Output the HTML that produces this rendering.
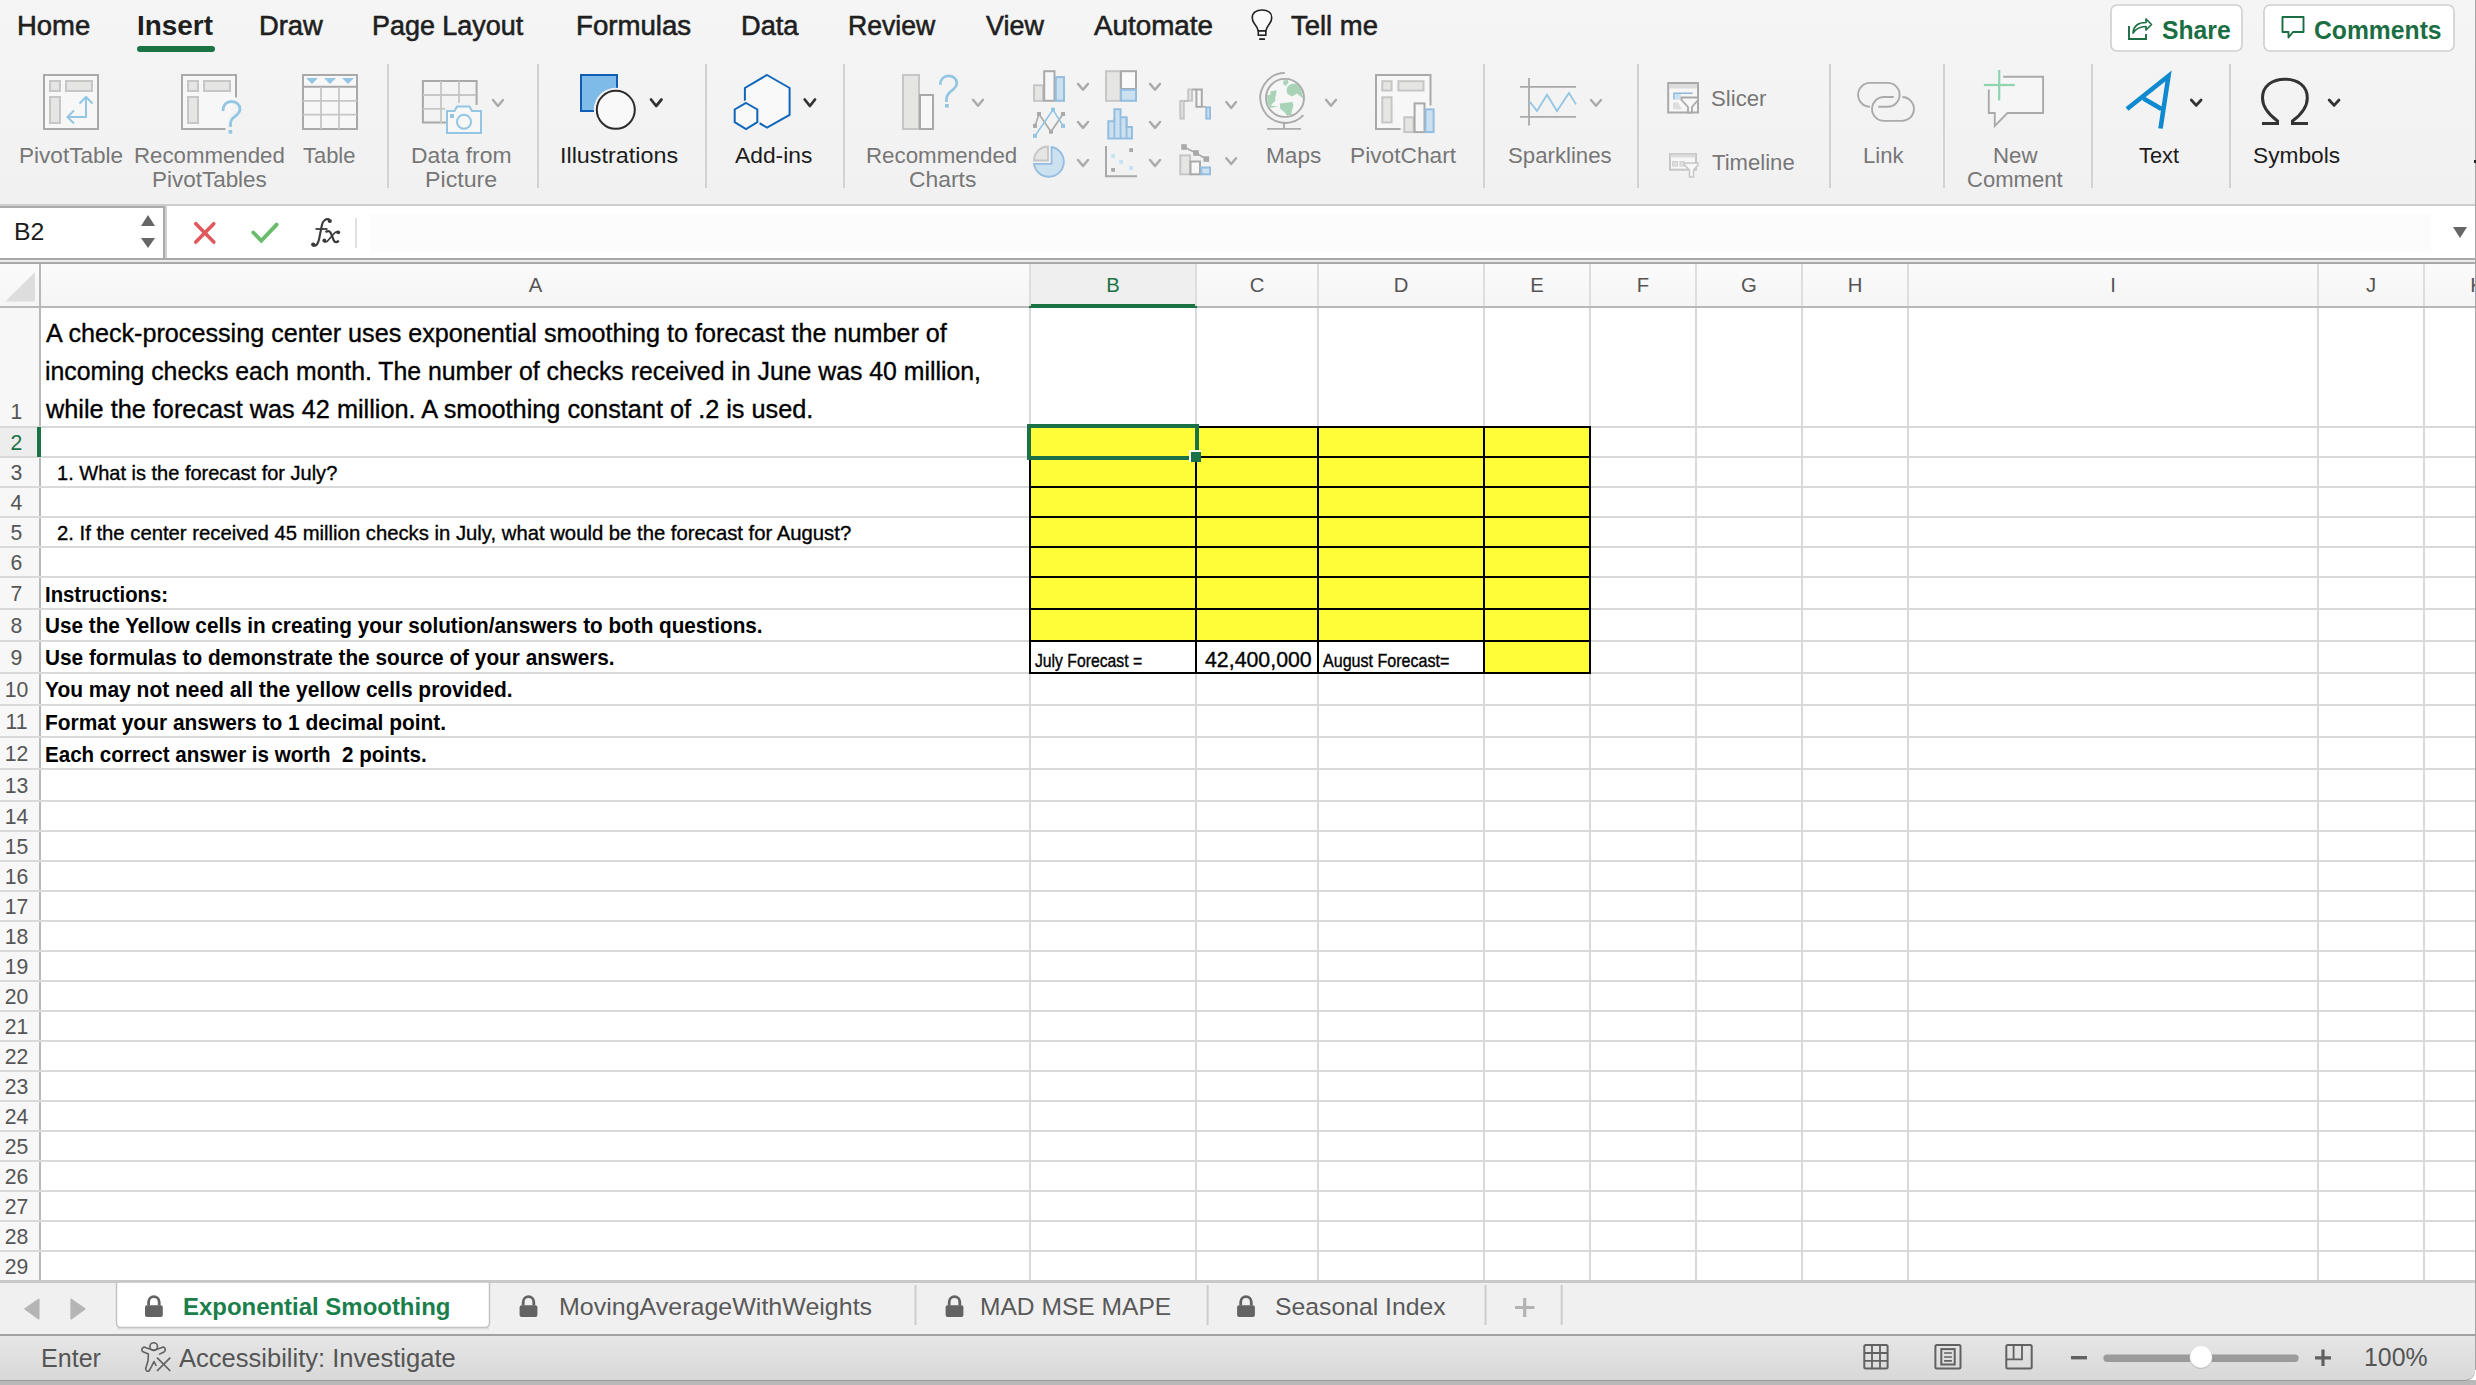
<!DOCTYPE html>
<html><head><meta charset="utf-8"><style>
html,body{margin:0;padding:0}
body{width:2476px;height:1385px;position:relative;overflow:hidden;background:#fff;font-family:"Liberation Sans",sans-serif}
.t{position:absolute;white-space:pre;line-height:1;transform-origin:0 0}
</style></head><body>
<div style="position:absolute;left:0;top:0;width:2476px;height:204px;background:linear-gradient(#f5f5f5,#f1f1f1)"></div>
<div style="position:absolute;left:0;top:204px;width:2476px;height:2px;background:#cdcdcd"></div>
<div class="t" style="left:17.03px;top:11.62px;font-size:27.62px;color:#1f1f1f;transform:scaleX(0.9940);-webkit-text-stroke:0.6px #1f1f1f;">Home</div>
<div class="t" style="left:136.94px;top:11.62px;font-size:27.62px;color:#1f1f1f;font-weight:bold;transform:scaleX(1.0107);">Insert</div>
<div class="t" style="left:259.43px;top:11.62px;font-size:27.62px;color:#1f1f1f;transform:scaleX(0.9898);-webkit-text-stroke:0.6px #1f1f1f;">Draw</div>
<div class="t" style="left:372.38px;top:11.62px;font-size:27.62px;color:#1f1f1f;transform:scaleX(0.9750);-webkit-text-stroke:0.6px #1f1f1f;">Page Layout</div>
<div class="t" style="left:575.96px;top:11.62px;font-size:27.62px;color:#1f1f1f;transform:scaleX(1.0006);-webkit-text-stroke:0.6px #1f1f1f;">Formulas</div>
<div class="t" style="left:741.35px;top:11.62px;font-size:27.62px;color:#1f1f1f;transform:scaleX(0.9854);-webkit-text-stroke:0.6px #1f1f1f;">Data</div>
<div class="t" style="left:847.97px;top:11.62px;font-size:27.62px;color:#1f1f1f;transform:scaleX(0.9628);-webkit-text-stroke:0.6px #1f1f1f;">Review</div>
<div class="t" style="left:986.00px;top:11.62px;font-size:27.62px;color:#1f1f1f;transform:scaleX(0.9748);-webkit-text-stroke:0.6px #1f1f1f;">View</div>
<div class="t" style="left:1094.00px;top:11.62px;font-size:27.62px;color:#1f1f1f;transform:scaleX(1.0064);-webkit-text-stroke:0.6px #1f1f1f;">Automate</div>
<div class="t" style="left:1291.00px;top:11.62px;font-size:27.62px;color:#1f1f1f;transform:scaleX(0.9944);-webkit-text-stroke:0.6px #1f1f1f;">Tell me</div>
<div style="position:absolute;left:137px;top:46px;width:78px;height:6px;border-radius:3px;background:#1b7343"></div>
<svg style="position:absolute;left:0;top:0" width="2476" height="206"><rect x="387" y="64" width="2" height="124" fill="#d2d2d2"/><rect x="537" y="64" width="2" height="124" fill="#d2d2d2"/><rect x="705" y="64" width="2" height="124" fill="#d2d2d2"/><rect x="843" y="64" width="2" height="124" fill="#d2d2d2"/><rect x="1483" y="64" width="2" height="124" fill="#d2d2d2"/><rect x="1637" y="64" width="2" height="124" fill="#d2d2d2"/><rect x="1829" y="64" width="2" height="124" fill="#d2d2d2"/><rect x="1943" y="64" width="2" height="124" fill="#d2d2d2"/><rect x="2091" y="64" width="2" height="124" fill="#d2d2d2"/><rect x="2229" y="64" width="2" height="124" fill="#d2d2d2"/><rect x="44.00" y="75.00" width="54.00" height="54.00" fill="#f7f7f7" stroke="#a9a9a9" stroke-width="2"/><rect x="50.00" y="81.00" width="10.00" height="10.00" fill="#e5e5e3" stroke="#c6c6c6" stroke-width="2"/><rect x="66.00" y="81.00" width="26.00" height="10.00" fill="#e5e5e3" stroke="#c6c6c6" stroke-width="2"/><rect x="50.00" y="97.00" width="10.00" height="26.00" fill="#e5e5e3" stroke="#c6c6c6" stroke-width="2"/><polyline points="67.3,117 86,117 86,97" fill="none" stroke="#93c6e3" stroke-width="2"/><polyline points="79.5,103.5 86,97 92.5,103.5" fill="none" stroke="#93c6e3" stroke-width="2"/><polyline points="74,110.5 67.5,117 74,123.5" fill="none" stroke="#93c6e3" stroke-width="2"/><polyline points="236,97.5 236,75 182,75 182,129 225.5,129" fill="#f7f7f7" stroke="#a9a9a9" stroke-width="2"/><rect x="188.00" y="81.00" width="10.00" height="10.00" fill="#e5e5e3" stroke="#c6c6c6" stroke-width="2"/><rect x="204.00" y="81.00" width="26.00" height="10.00" fill="#e5e5e3" stroke="#c6c6c6" stroke-width="2"/><rect x="188.00" y="97.00" width="10.00" height="26.00" fill="#e5e5e3" stroke="#c6c6c6" stroke-width="2"/><path d="M223,111 C223,104.5 227,101.5 231.5,101.5 C236.5,101.5 240,105 240,109 C240,114 235,116 232.5,118.5 C231,120 230.5,121.5 230.5,124 L230.5,127" fill="none" stroke="#93c6e3" stroke-width="2.8"/><rect x="228.6" y="130" width="3.6" height="3.6" fill="#93c6e3"/><rect x="303.00" y="75.00" width="54.00" height="54.00" fill="#f7f7f7" stroke="#a9a9a9" stroke-width="2"/><line x1="303" y1="86.8" x2="357" y2="86.8" stroke="#a9a9a9" stroke-width="2"/><line x1="303" y1="100.8" x2="357" y2="100.8" stroke="#c6c6c6" stroke-width="1.8"/><line x1="303" y1="114.7" x2="357" y2="114.7" stroke="#c6c6c6" stroke-width="1.8"/><line x1="321" y1="87" x2="321" y2="129" stroke="#c6c6c6" stroke-width="1.8"/><line x1="339" y1="87" x2="339" y2="129" stroke="#c6c6c6" stroke-width="1.8"/><polygon points="306,78 318,78 312,84" fill="#93c6e3"/><polygon points="324,78 336,78 330,84" fill="#93c6e3"/><polygon points="342,78 354,78 348,84" fill="#93c6e3"/><polyline points="446,122.5 422.9,122.5 422.9,80.9 476.6,80.9 476.6,105" fill="none" stroke="#a9a9a9" stroke-width="2"/><line x1="423" y1="95" x2="476" y2="95" stroke="#c6c6c6" stroke-width="1.8"/><line x1="423" y1="108.8" x2="445" y2="108.8" stroke="#c6c6c6" stroke-width="1.8"/><line x1="441" y1="81" x2="441" y2="123" stroke="#c6c6c6" stroke-width="1.8"/><line x1="459" y1="81" x2="459" y2="103" stroke="#c6c6c6" stroke-width="1.8"/><path d="M447,111 L454.5,111 L457,106.5 L469.5,106.5 L472,111 L481,111 L481,133 L447,133 Z" fill="#f7f7f7" stroke="#93c6e3" stroke-width="2"/><circle cx="464" cy="121.8" r="7" fill="none" stroke="#93c6e3" stroke-width="2"/><rect x="450" y="114" width="4" height="4" fill="#93c6e3"/><polyline points="493.0,100.0 498.0,106.0 503.0,100.0" fill="none" stroke="#aaaaaa" stroke-width="2.4" stroke-linecap="round" stroke-linejoin="round"/><rect x="581" y="75" width="36" height="36" fill="#7fbbe8" stroke="#0f5eb3" stroke-width="2"/><circle cx="615.8" cy="109.8" r="22" fill="#f2f2f2"/><circle cx="615.8" cy="109.8" r="19" fill="#f9f9f9" stroke="#2b2b2b" stroke-width="2"/><polyline points="651.0,99.5 656.2,106.0 661.5,99.5" fill="none" stroke="#333" stroke-width="2.8" stroke-linecap="round" stroke-linejoin="round"/><polygon points="767,75 789.6,88 789.6,114.8 767,127.5 744.9,114.8 744.9,88" fill="#f9f9f9" stroke="#1067b9" stroke-width="2"/><polygon points="746,103 757.3,109.5 757.3,122.2 746,129 734.7,122.2 734.7,109.5" fill="#f2f2f2" stroke="#f2f2f2" stroke-width="5"/><polygon points="746,103 757.3,109.5 757.3,122.2 746,129 734.7,122.2 734.7,109.5" fill="#f9f9f9" stroke="#1067b9" stroke-width="2"/><polyline points="804.7,99.5 809.9,106.0 815.0,99.5" fill="none" stroke="#333" stroke-width="2.8" stroke-linecap="round" stroke-linejoin="round"/><rect x="903.00" y="75.00" width="16.00" height="54.00" fill="#e5e5e3" stroke="#c6c6c6" stroke-width="2"/><rect x="920.00" y="95.00" width="13.00" height="34.00" fill="#f7f7f7" stroke="#a9a9a9" stroke-width="2"/><path d="M940.3,84.8 C940.3,79 944,75.8 948.5,75.8 C953.5,75.8 956.8,79 956.8,83 C956.8,88 952,90 949,93 C947,95 946.4,96.5 946.4,99 L946.4,102" fill="none" stroke="#93c6e3" stroke-width="2.7"/><rect x="945" y="104" width="3.8" height="3.6" fill="#93c6e3"/><polyline points="973.0,99.7 978.0,105.8 983.0,99.7" fill="none" stroke="#aaaaaa" stroke-width="2.4" stroke-linecap="round" stroke-linejoin="round"/><rect x="1034.00" y="85.30" width="9.00" height="15.50" fill="#e5e5e3" stroke="#c6c6c6" stroke-width="2"/><rect x="1044.20" y="71.20" width="10.30" height="29.60" fill="#f7f7f7" stroke="#a9a9a9" stroke-width="2"/><rect x="1055.80" y="77.10" width="8.20" height="23.70" fill="#cbe1f0" stroke="#95bddf" stroke-width="2"/><polyline points="1078.0,83.9 1083.0,89.8 1088.0,83.9" fill="none" stroke="#aaaaaa" stroke-width="2.4" stroke-linecap="round" stroke-linejoin="round"/><rect x="1106.00" y="71.20" width="14.50" height="29.60" fill="#e5e5e3" stroke="#c6c6c6" stroke-width="2"/><rect x="1121.00" y="71.20" width="15.00" height="17.80" fill="#fafafa" stroke="#a9a9a9" stroke-width="2"/><rect x="1121.00" y="89.80" width="15.00" height="11.00" fill="#cbe1f0" stroke="#95bddf" stroke-width="2"/><polyline points="1150.0,83.9 1155.0,89.8 1160.0,83.9" fill="none" stroke="#aaaaaa" stroke-width="2.4" stroke-linecap="round" stroke-linejoin="round"/><rect x="1180.30" y="101.00" width="3.50" height="17.60" fill="#e5e5e3" stroke="#c6c6c6" stroke-width="2"/><rect x="1188.20" y="89.50" width="3.80" height="11.30" fill="#e5e5e3" stroke="#c6c6c6" stroke-width="2"/><rect x="1196.40" y="89.50" width="5.40" height="17.30" fill="#f7f7f7" stroke="#a9a9a9" stroke-width="2"/><rect x="1206.30" y="107.40" width="3.70" height="11.20" fill="#cbe1f0" stroke="#95bddf" stroke-width="2"/><line x1="1184" y1="101" x2="1188" y2="101" stroke="#a9a9a9" stroke-width="1.4"/><line x1="1192.5" y1="89.5" x2="1196" y2="89.5" stroke="#a9a9a9" stroke-width="2"/><line x1="1202" y1="106.8" x2="1206" y2="106.8" stroke="#a9a9a9" stroke-width="1.4"/><polyline points="1226.3,102.0 1231.2,107.9 1236.0,102.0" fill="none" stroke="#aaaaaa" stroke-width="2.4" stroke-linecap="round" stroke-linejoin="round"/><polyline points="1035,125.9 1039,114 1051,131.7 1063,114" fill="none" stroke="#a9a9a9" stroke-width="1.6"/><rect x="1033" y="123.9" width="4" height="4" fill="#a9a9a9"/><rect x="1037" y="112" width="4" height="4" fill="#a9a9a9"/><rect x="1049" y="129.7" width="4" height="4" fill="#a9a9a9"/><rect x="1061" y="112" width="4" height="4" fill="#a9a9a9"/><polyline points="1035,135.9 1053,109.8 1063,125.9" fill="none" stroke="#93c6e3" stroke-width="1.6"/><rect x="1033" y="133.9" width="4" height="4" fill="#93c6e3"/><rect x="1051" y="107.8" width="4" height="4" fill="#93c6e3"/><rect x="1061" y="123.9" width="4" height="4" fill="#93c6e3"/><polyline points="1078.0,122.0 1083.0,127.9 1088.0,122.0" fill="none" stroke="#aaaaaa" stroke-width="2.4" stroke-linecap="round" stroke-linejoin="round"/><path d="M1108.3,138.6 L1108.3,121.3 L1114.4,121.3 L1114.4,109.3 L1120.5,109.3 L1120.5,117.3 L1126.6,117.3 L1126.6,127.1 L1132,127.1 L1132,138.6 Z" fill="#cbe1f0" stroke="#95bddf" stroke-width="2"/><line x1="1114.4" y1="118" x2="1114.4" y2="138" stroke="#95bddf" stroke-width="1.8"/><line x1="1120.5" y1="118" x2="1120.5" y2="138" stroke="#95bddf" stroke-width="1.8"/><line x1="1126.6" y1="118" x2="1126.6" y2="138" stroke="#95bddf" stroke-width="1.8"/><polyline points="1150.0,122.0 1155.0,127.9 1160.0,122.0" fill="none" stroke="#aaaaaa" stroke-width="2.4" stroke-linecap="round" stroke-linejoin="round"/><path d="M1051.6,147 A15,15 0 1 1 1034,163.8 L1051.6,163.8 Z" fill="#cbe1f0" stroke="#95bddf" stroke-width="1.8"/><path d="M1048,146.5 L1048,160.5 L1034,160.5 A14,14 0 0 1 1048,146.5 Z" fill="#e5e5e3" stroke="#c6c6c6" stroke-width="1.8"/><polyline points="1078.0,160.0 1083.0,166.0 1088.0,160.0" fill="none" stroke="#aaaaaa" stroke-width="2.4" stroke-linecap="round" stroke-linejoin="round"/><polyline points="1106,146 1106,176.2 1137,176.2" fill="none" stroke="#a9a9a9" stroke-width="2"/><rect x="1129.2" y="148.2" width="3.8" height="3.8" fill="#a9a9a9"/><rect x="1111.2" y="168" width="3.8" height="3.8" fill="#a9a9a9"/><rect x="1111.2" y="154" width="3.8" height="3.8" fill="#c5e2f2"/><rect x="1119.2" y="160" width="3.8" height="3.8" fill="#c5e2f2"/><rect x="1129.2" y="166" width="3.8" height="3.8" fill="#c5e2f2"/><polyline points="1150.0,160.0 1155.0,166.0 1160.0,160.0" fill="none" stroke="#aaaaaa" stroke-width="2.4" stroke-linecap="round" stroke-linejoin="round"/><rect x="1180.30" y="155.40" width="9.70" height="18.90" fill="#e5e5e3" stroke="#c6c6c6" stroke-width="2"/><rect x="1190.50" y="161.50" width="9.50" height="12.80" fill="#f7f7f7" stroke="#a9a9a9" stroke-width="2"/><rect x="1201.20" y="167.50" width="8.80" height="6.80" fill="#cbe1f0" stroke="#95bddf" stroke-width="2"/><polyline points="1184,147 1196,153 1206.2,159" fill="none" stroke="#a9a9a9" stroke-width="1.6"/><rect x="1181.2" y="144.2" width="5.6" height="5.6" fill="#a9a9a9"/><rect x="1193.2" y="150.2" width="5.6" height="5.6" fill="#a9a9a9"/><rect x="1203.5" y="156.3" width="5.6" height="5.6" fill="#a9a9a9"/><polyline points="1226.3,158.2 1231.2,164.1 1236.0,158.2" fill="none" stroke="#aaaaaa" stroke-width="2.4" stroke-linecap="round" stroke-linejoin="round"/><circle cx="1285" cy="97.9" r="19" fill="#f6f6f6" stroke="#aaaaaa" stroke-width="1.9"/><path d="M1270.5,91.2 L1276.7,90.3 L1276.3,93.4 L1275.2,97.3 L1275.2,101.2 L1273.6,102.4 L1271.6,104.3 L1271.3,105.9 L1278.3,106.3 L1272.8,107.4 L1270,107.8 L1267.5,103 L1267,95.3 L1270.5,94.6 Z M1279.8,103.5 L1292.3,102 L1293.5,105.5 L1292.3,109 L1291.5,112.9 L1291.9,114.8 L1286.8,115.6 L1285.3,112.9 L1280.2,108.6 Z M1287.6,86.4 L1291.1,84 L1296.2,83.6 L1300.9,88.7 L1303.2,98.8 L1297,93.4 L1292.3,96.5 L1287.6,94.2 L1286.5,90.3 Z M1283.3,80.5 L1288,80.1 L1288.4,82.9 L1285.3,86 L1283.3,84 Z" fill="#a9d3b7"/><path d="M1284.9,72.9 A25,25 0 1 0 1303.4,115.2" fill="none" stroke="#aaaaaa" stroke-width="1.9"/><line x1="1284" y1="122.5" x2="1284" y2="129" stroke="#aaaaaa" stroke-width="1.9"/><line x1="1267" y1="128.9" x2="1301" y2="128.9" stroke="#aaaaaa" stroke-width="1.9"/><polyline points="1326.0,99.8 1331.0,105.8 1336.0,99.8" fill="none" stroke="#aaaaaa" stroke-width="2.4" stroke-linecap="round" stroke-linejoin="round"/><polyline points="1430.5,105.6 1430.5,75 1376,75 1376,129 1400.6,129" fill="#f7f7f7" stroke="#a9a9a9" stroke-width="2"/><rect x="1382.30" y="81.20" width="9.30" height="9.30" fill="#e5e5e3" stroke="#c6c6c6" stroke-width="2"/><rect x="1398.40" y="81.20" width="25.10" height="9.30" fill="#e5e5e3" stroke="#c6c6c6" stroke-width="2"/><rect x="1382.30" y="97.30" width="9.30" height="25.10" fill="#e5e5e3" stroke="#c6c6c6" stroke-width="2"/><rect x="1404.30" y="117.30" width="9.30" height="14.80" fill="#e5e5e3" stroke="#c6c6c6" stroke-width="2"/><rect x="1414.60" y="103.40" width="9.90" height="28.70" fill="#f7f7f7" stroke="#a9a9a9" stroke-width="2"/><rect x="1425.50" y="109.40" width="8.10" height="22.70" fill="#cbe1f0" stroke="#95bddf" stroke-width="2"/><line x1="1529" y1="78" x2="1529" y2="125.6" stroke="#a9a9a9" stroke-width="1.8"/><line x1="1520" y1="86.8" x2="1576" y2="86.8" stroke="#a9a9a9" stroke-width="1.8"/><line x1="1520" y1="116.9" x2="1576" y2="116.9" stroke="#a9a9a9" stroke-width="1.8"/><polyline points="1530,102 1537,111 1547,94.7 1557,111 1569,92.9 1576,104.4" fill="none" stroke="#93c6e3" stroke-width="1.8"/><polyline points="1591.0,100.0 1596.0,105.8 1601.0,100.0" fill="none" stroke="#aaaaaa" stroke-width="2.4" stroke-linecap="round" stroke-linejoin="round"/><rect x="1668.20" y="83.00" width="29.80" height="29.50" fill="#f7f7f7" stroke="#a9a9a9" stroke-width="2"/><rect x="1669" y="84" width="28" height="4.5" fill="#dcdcdc"/><polyline points="1674,99.6 1674,93.3 1692.7,93.3" fill="none" stroke="#8fb8dd" stroke-width="1.6"/><rect x="1674.8" y="94" width="6" height="5.6" fill="#cde2f1"/><path d="M1673,102.6 L1678,102.6 L1682,109.3 L1673,109.3 Z" fill="#dedede"/><path d="M1681.5,97.5 L1698,97.5 L1698,100 L1692,107 L1692,112.5 L1688,112.5 L1688,107 L1681.5,100 Z" fill="#f7f7f7" stroke="#a9a9a9" stroke-width="1.8"/><rect x="1670.00" y="154.10" width="26.00" height="15.60" fill="#f7f7f7" stroke="#c6c6c6" stroke-width="2"/><rect x="1670.5" y="154.5" width="25" height="3" fill="#dcdcdc"/><rect x="1672.5" y="161.5" width="5" height="4.5" fill="#dedede" stroke="#d0d0d0" stroke-width="1"/><rect x="1680" y="161.5" width="4" height="4.5" fill="#dedede" stroke="#d0d0d0" stroke-width="1"/><path d="M1684.5,163 L1698,163 L1698,165 L1693.5,170 L1693.5,177 L1689.5,177 L1689.5,170 L1684.5,165 Z" fill="#f7f7f7" stroke="#c6c6c6" stroke-width="1.5"/><path d="M1870,106.7 A11.9,11.9 0 0 1 1870,82.9 L1887.7,82.9 A11.9,11.9 0 0 1 1887.7,106.7 L1878.3,106.7" fill="none" stroke="#aaaaaa" stroke-width="1.9"/><path d="M1893.8,97 L1884,97 A11.95,11.95 0 0 0 1884,120.9 L1901.6,120.9 A11.95,11.95 0 0 0 1902.4,97" fill="none" stroke="#aaaaaa" stroke-width="1.9"/><polyline points="2003.2,76.8 2043.1,76.8 2043.1,113 2007.4,113 1994.8,126 1994.8,113 1988.8,113 1988.8,89.4" fill="#f6f6f6" stroke="#aaaaaa" stroke-width="1.9"/><line x1="1999.2" y1="70" x2="1999.2" y2="100.4" stroke="#8fd4b0" stroke-width="2.2"/><line x1="1983.8" y1="85" x2="2014.8" y2="85" stroke="#8fd4b0" stroke-width="2.2"/><path d="M2127,109 L2168.5,76 L2160.5,128.5 M2143.5,98.4 L2161.5,109" fill="none" stroke="#0f8ad0" stroke-width="4.6" stroke-linejoin="miter"/><polyline points="2191.3,100.0 2196.2,105.4 2201.1,100.0" fill="none" stroke="#333" stroke-width="2.8" stroke-linecap="round" stroke-linejoin="round"/><path d="M2262,123.5 L2277.5,123.5 L2277.5,121 C2268,114 2262.5,107 2262.5,98 C2262.5,86 2272,79.2 2285,79.2 C2298,79.2 2307.3,86 2307.3,98 C2307.3,107 2302,114 2292.5,121 L2292.5,123.5 L2308,123.5" fill="none" stroke="#333" stroke-width="3"/><polyline points="2329.2,100.0 2334.1,105.4 2339.0,100.0" fill="none" stroke="#333" stroke-width="2.8" stroke-linecap="round" stroke-linejoin="round"/><path d="M1258.3,31 C1257.5,27 1255.5,25 1254,23 C1252.5,21 1252.3,19.5 1252.3,17.5 C1252.3,12.5 1256.5,10 1262,10 C1267.5,10 1271.7,12.5 1271.7,17.5 C1271.7,19.5 1271.5,21 1270,23 C1268.5,25 1266.5,27 1265.8,31 Z" fill="#fafafa" stroke="#222" stroke-width="1.6"/><rect x="1258.3" y="31" width="7.5" height="4.2" fill="#fafafa" stroke="#222" stroke-width="1.6"/><rect x="1259.2" y="38.2" width="5.8" height="1.8" fill="#222"/><rect x="2111" y="5" width="131" height="46" rx="6" fill="#fff" stroke="#cfcfcf" stroke-width="1.6"/><rect x="2264" y="5" width="190" height="46" rx="6" fill="#fff" stroke="#cfcfcf" stroke-width="1.6"/><polyline points="2129,26 2129,39 2146,39 2146,34" fill="none" stroke="#1b6e43" stroke-width="1.9"/><path d="M2133,33 C2133.5,26.5 2138,22.5 2146,22.5 L2146,19 L2151.5,24.5 L2146,30 L2146,26.5 C2140,26.5 2136,28.5 2133,33 Z" fill="none" stroke="#1b6e43" stroke-width="1.7" stroke-linejoin="round"/><path d="M2282.5,17 L2303.5,17 L2303.5,32 L2293,32 L2288.5,37.5 L2288.5,32 L2282.5,32 Z" fill="none" stroke="#1b6e43" stroke-width="1.9" stroke-linejoin="round"/></svg>
<div class="t" style="left:18.55px;top:144.64px;font-size:21.80px;color:#777777;transform:scaleX(1.0357);">PivotTable</div>
<div class="t" style="left:133.76px;top:144.64px;font-size:21.80px;color:#777777;transform:scaleX(1.0205);">Recommended</div>
<div class="t" style="left:152.15px;top:168.54px;font-size:21.80px;color:#777777;transform:scaleX(1.0301);">PivotTables</div>
<div class="t" style="left:302.90px;top:144.64px;font-size:21.80px;color:#777777;transform:scaleX(1.0062);">Table</div>
<div class="t" style="left:411.13px;top:144.64px;font-size:21.80px;color:#777777;transform:scaleX(1.0509);">Data from</div>
<div class="t" style="left:424.91px;top:168.54px;font-size:21.80px;color:#777777;transform:scaleX(1.0647);">Picture</div>
<div class="t" style="left:560.35px;top:144.64px;font-size:21.80px;color:#1c1c1c;transform:scaleX(1.0717);">Illustrations</div>
<div class="t" style="left:735.10px;top:144.64px;font-size:21.80px;color:#1c1c1c;transform:scaleX(1.0462);">Add-ins</div>
<div class="t" style="left:866.25px;top:144.64px;font-size:21.80px;color:#777777;transform:scaleX(1.0231);">Recommended</div>
<div class="t" style="left:908.97px;top:168.54px;font-size:21.80px;color:#777777;transform:scaleX(1.0499);">Charts</div>
<div class="t" style="left:1265.88px;top:144.64px;font-size:21.80px;color:#777777;transform:scaleX(1.0367);">Maps</div>
<div class="t" style="left:1349.96px;top:144.64px;font-size:21.80px;color:#777777;transform:scaleX(1.0422);">PivotChart</div>
<div class="t" style="left:1507.89px;top:144.64px;font-size:21.80px;color:#777777;transform:scaleX(1.0184);">Sparklines</div>
<div class="t" style="left:1710.98px;top:88.14px;font-size:21.80px;color:#777777;transform:scaleX(1.0173);">Slicer</div>
<div class="t" style="left:1712.00px;top:152.14px;font-size:21.80px;color:#777777;transform:scaleX(1.0136);">Timeline</div>
<div class="t" style="left:1862.90px;top:144.64px;font-size:21.80px;color:#777777;transform:scaleX(1.0140);">Link</div>
<div class="t" style="left:1992.90px;top:144.64px;font-size:21.80px;color:#777777;transform:scaleX(1.0206);">New</div>
<div class="t" style="left:1967.27px;top:168.54px;font-size:21.80px;color:#777777;transform:scaleX(1.0130);">Comment</div>
<div class="t" style="left:2139.00px;top:144.64px;font-size:21.80px;color:#1c1c1c;transform:scaleX(1.0000);">Text</div>
<div class="t" style="left:2252.98px;top:144.64px;font-size:21.80px;color:#1c1c1c;transform:scaleX(1.0425);">Symbols</div>
<div class="t" style="left:2161.97px;top:17.54px;font-size:25.00px;color:#1b6e43;font-weight:bold;transform:scaleX(0.9880);">Share</div>
<div class="t" style="left:2314.37px;top:17.54px;font-size:25.00px;color:#1b6e43;font-weight:bold;transform:scaleX(0.9876);">Comments</div>
<div style="position:absolute;left:0;top:206px;width:2476px;height:52px;background:#fff"></div>
<div style="position:absolute;left:0;top:206px;width:165px;height:2px;background:#ababab"></div>
<div style="position:absolute;left:163px;top:206px;width:2px;height:52px;background:#ababab"></div>
<div style="position:absolute;left:165px;top:206px;width:2px;height:52px;background:#d0d0d0"></div>
<div style="position:absolute;left:0;top:258px;width:2476px;height:2px;background:#a9a9a9"></div>
<div style="position:absolute;left:0;top:260px;width:2476px;height:2px;background:#ececec"></div>
<div style="position:absolute;left:0;top:262px;width:2476px;height:2px;background:#a9a9a9"></div>
<div style="position:absolute;left:370px;top:214px;width:2061px;height:38px;background:#fcfcfc"></div>
<div class="t" style="left:13.75px;top:219.68px;font-size:24.71px;color:#1a1a1a;transform:scaleX(1.0041);">B2</div>
<svg style="position:absolute;left:0;top:0" width="2476" height="264"><polygon points="141,226 148,215 155,226" fill="#666"/><polygon points="141,238 155,238 148,248" fill="#666"/><path d="M195.8,223.7 L213.8,242.1 M213.8,223.7 L195.8,242.1" stroke="#e0585c" stroke-width="3.6" stroke-linecap="round"/><polyline points="253.3,232.5 261.3,240.8 276.6,224.6" fill="none" stroke="#69bd6a" stroke-width="3.9" stroke-linecap="round" stroke-linejoin="miter"/><rect x="355" y="218" width="2" height="30" fill="#e0e0e0"/><polygon points="2453,227 2467,227 2460,238" fill="#666"/></svg>
<svg style="position:absolute;left:0;top:0" width="400" height="264"><path d="M313,245.5 C316.5,246.5 318.3,243.5 319.2,238.5 L321.8,225.5 C322.8,220.5 325.5,218.5 329.5,219.3" fill="none" stroke="#3a3a3a" stroke-width="2.1"/><circle cx="313.2" cy="244.6" r="2.1" fill="#3a3a3a"/><circle cx="329.8" cy="221" r="2.1" fill="#3a3a3a"/><path d="M315.5,229 L327.5,229" stroke="#3a3a3a" stroke-width="1.8"/><path d="M325.5,232.2 C328.3,230.3 330.2,231 331.3,234.2 L333.6,240 C334.6,242.6 336.6,242.8 338.8,240.6" fill="none" stroke="#3a3a3a" stroke-width="2.2"/><path d="M339,232.2 C337.2,230.8 335.6,231.5 333.6,234 L328.2,240.3 C326.4,242.5 324.8,242.3 323.6,241" fill="none" stroke="#3a3a3a" stroke-width="1.7"/><circle cx="338.2" cy="232.3" r="1.9" fill="#3a3a3a"/><circle cx="324.3" cy="240.5" r="1.9" fill="#3a3a3a"/></svg>
<div style="position:absolute;left:0;top:264px;width:2476px;height:42px;background:linear-gradient(#fbfbfb,#f5f5f5)"></div>
<div style="position:absolute;left:1031px;top:264px;width:164px;height:42px;background:#efefef"></div>
<div style="position:absolute;left:0;top:306px;width:2476px;height:2px;background:#b8b8b8"></div>
<div style="position:absolute;left:1029px;top:304px;width:168px;height:4px;background:#1b7343"></div>
<svg style="position:absolute;left:0;top:264px" width="40" height="42"><polygon points="5.4,37.6 35,8 35,37.6" fill="#dddddd"/></svg>
<div style="position:absolute;left:0;top:308px;width:40px;height:972px;background:#f7f7f7"></div>
<div style="position:absolute;left:0;top:427px;width:40px;height:30px;background:#ededed"></div>
<div style="position:absolute;left:39px;top:264px;width:2px;height:1016px;background:#b8b8b8"></div>
<div style="position:absolute;left:1029px;top:308px;width:2px;height:972px;background:#d9d9d9"></div>
<div style="position:absolute;left:1029px;top:264px;width:2px;height:42px;background:#dedede"></div>
<div style="position:absolute;left:1195px;top:308px;width:2px;height:972px;background:#d9d9d9"></div>
<div style="position:absolute;left:1195px;top:264px;width:2px;height:42px;background:#dedede"></div>
<div style="position:absolute;left:1317px;top:308px;width:2px;height:972px;background:#d9d9d9"></div>
<div style="position:absolute;left:1317px;top:264px;width:2px;height:42px;background:#dedede"></div>
<div style="position:absolute;left:1483px;top:308px;width:2px;height:972px;background:#d9d9d9"></div>
<div style="position:absolute;left:1483px;top:264px;width:2px;height:42px;background:#dedede"></div>
<div style="position:absolute;left:1589px;top:308px;width:2px;height:972px;background:#d9d9d9"></div>
<div style="position:absolute;left:1589px;top:264px;width:2px;height:42px;background:#dedede"></div>
<div style="position:absolute;left:1695px;top:308px;width:2px;height:972px;background:#d9d9d9"></div>
<div style="position:absolute;left:1695px;top:264px;width:2px;height:42px;background:#dedede"></div>
<div style="position:absolute;left:1801px;top:308px;width:2px;height:972px;background:#d9d9d9"></div>
<div style="position:absolute;left:1801px;top:264px;width:2px;height:42px;background:#dedede"></div>
<div style="position:absolute;left:1907px;top:308px;width:2px;height:972px;background:#d9d9d9"></div>
<div style="position:absolute;left:1907px;top:264px;width:2px;height:42px;background:#dedede"></div>
<div style="position:absolute;left:2317px;top:308px;width:2px;height:972px;background:#d9d9d9"></div>
<div style="position:absolute;left:2317px;top:264px;width:2px;height:42px;background:#dedede"></div>
<div style="position:absolute;left:2423px;top:308px;width:2px;height:972px;background:#d9d9d9"></div>
<div style="position:absolute;left:2423px;top:264px;width:2px;height:42px;background:#dedede"></div>
<div style="position:absolute;left:2529px;top:308px;width:2px;height:972px;background:#d9d9d9"></div>
<div style="position:absolute;left:2529px;top:264px;width:2px;height:42px;background:#dedede"></div>
<div style="position:absolute;left:0;top:426px;width:2476px;height:2px;background:#d9d9d9"></div>
<div style="position:absolute;left:0;top:456px;width:2476px;height:2px;background:#d9d9d9"></div>
<div style="position:absolute;left:0;top:486px;width:2476px;height:2px;background:#d9d9d9"></div>
<div style="position:absolute;left:0;top:516px;width:2476px;height:2px;background:#d9d9d9"></div>
<div style="position:absolute;left:0;top:546px;width:2476px;height:2px;background:#d9d9d9"></div>
<div style="position:absolute;left:0;top:576px;width:2476px;height:2px;background:#d9d9d9"></div>
<div style="position:absolute;left:0;top:608px;width:2476px;height:2px;background:#d9d9d9"></div>
<div style="position:absolute;left:0;top:640px;width:2476px;height:2px;background:#d9d9d9"></div>
<div style="position:absolute;left:0;top:672px;width:2476px;height:2px;background:#d9d9d9"></div>
<div style="position:absolute;left:0;top:704px;width:2476px;height:2px;background:#d9d9d9"></div>
<div style="position:absolute;left:0;top:736px;width:2476px;height:2px;background:#d9d9d9"></div>
<div style="position:absolute;left:0;top:768px;width:2476px;height:2px;background:#d9d9d9"></div>
<div style="position:absolute;left:0;top:800px;width:2476px;height:2px;background:#d9d9d9"></div>
<div style="position:absolute;left:0;top:830px;width:2476px;height:2px;background:#d9d9d9"></div>
<div style="position:absolute;left:0;top:860px;width:2476px;height:2px;background:#d9d9d9"></div>
<div style="position:absolute;left:0;top:890px;width:2476px;height:2px;background:#d9d9d9"></div>
<div style="position:absolute;left:0;top:920px;width:2476px;height:2px;background:#d9d9d9"></div>
<div style="position:absolute;left:0;top:950px;width:2476px;height:2px;background:#d9d9d9"></div>
<div style="position:absolute;left:0;top:980px;width:2476px;height:2px;background:#d9d9d9"></div>
<div style="position:absolute;left:0;top:1010px;width:2476px;height:2px;background:#d9d9d9"></div>
<div style="position:absolute;left:0;top:1040px;width:2476px;height:2px;background:#d9d9d9"></div>
<div style="position:absolute;left:0;top:1070px;width:2476px;height:2px;background:#d9d9d9"></div>
<div style="position:absolute;left:0;top:1100px;width:2476px;height:2px;background:#d9d9d9"></div>
<div style="position:absolute;left:0;top:1130px;width:2476px;height:2px;background:#d9d9d9"></div>
<div style="position:absolute;left:0;top:1160px;width:2476px;height:2px;background:#d9d9d9"></div>
<div style="position:absolute;left:0;top:1190px;width:2476px;height:2px;background:#d9d9d9"></div>
<div style="position:absolute;left:0;top:1220px;width:2476px;height:2px;background:#d9d9d9"></div>
<div style="position:absolute;left:0;top:1250px;width:2476px;height:2px;background:#d9d9d9"></div>
<div style="position:absolute;left:0;top:1280px;width:2476px;height:2px;background:#d9d9d9"></div>
<div class="t" style="left:485.5px;width:100px;text-align:center;top:274.8px;font-size:20.3px;color:#555">A</div>
<div class="t" style="left:1063.0px;width:100px;text-align:center;top:274.8px;font-size:20.3px;color:#1b7343">B</div>
<div class="t" style="left:1207.0px;width:100px;text-align:center;top:274.8px;font-size:20.3px;color:#555">C</div>
<div class="t" style="left:1351.0px;width:100px;text-align:center;top:274.8px;font-size:20.3px;color:#555">D</div>
<div class="t" style="left:1487.0px;width:100px;text-align:center;top:274.8px;font-size:20.3px;color:#555">E</div>
<div class="t" style="left:1593.0px;width:100px;text-align:center;top:274.8px;font-size:20.3px;color:#555">F</div>
<div class="t" style="left:1699.0px;width:100px;text-align:center;top:274.8px;font-size:20.3px;color:#555">G</div>
<div class="t" style="left:1805.0px;width:100px;text-align:center;top:274.8px;font-size:20.3px;color:#555">H</div>
<div class="t" style="left:2063.0px;width:100px;text-align:center;top:274.8px;font-size:20.3px;color:#555">I</div>
<div class="t" style="left:2321.0px;width:100px;text-align:center;top:274.8px;font-size:20.3px;color:#555">J</div>
<div class="t" style="left:2427.0px;width:100px;text-align:center;top:274.8px;font-size:20.3px;color:#555">K</div>
<div class="t" style="left:-33.5px;width:100px;text-align:center;top:400.8px;font-size:21.2px;color:#555">1</div>
<div class="t" style="left:-33.5px;width:100px;text-align:center;top:432.4px;font-size:21.2px;color:#1b7343">2</div>
<div class="t" style="left:-33.5px;width:100px;text-align:center;top:462.4px;font-size:21.2px;color:#555">3</div>
<div class="t" style="left:-33.5px;width:100px;text-align:center;top:492.4px;font-size:21.2px;color:#555">4</div>
<div class="t" style="left:-33.5px;width:100px;text-align:center;top:522.4px;font-size:21.2px;color:#555">5</div>
<div class="t" style="left:-33.5px;width:100px;text-align:center;top:552.4px;font-size:21.2px;color:#555">6</div>
<div class="t" style="left:-33.5px;width:100px;text-align:center;top:583.4px;font-size:21.2px;color:#555">7</div>
<div class="t" style="left:-33.5px;width:100px;text-align:center;top:615.4px;font-size:21.2px;color:#555">8</div>
<div class="t" style="left:-33.5px;width:100px;text-align:center;top:647.4px;font-size:21.2px;color:#555">9</div>
<div class="t" style="left:-33.5px;width:100px;text-align:center;top:679.4px;font-size:21.2px;color:#555">10</div>
<div class="t" style="left:-33.5px;width:100px;text-align:center;top:711.4px;font-size:21.2px;color:#555">11</div>
<div class="t" style="left:-33.5px;width:100px;text-align:center;top:743.4px;font-size:21.2px;color:#555">12</div>
<div class="t" style="left:-33.5px;width:100px;text-align:center;top:775.4px;font-size:21.2px;color:#555">13</div>
<div class="t" style="left:-33.5px;width:100px;text-align:center;top:806.4px;font-size:21.2px;color:#555">14</div>
<div class="t" style="left:-33.5px;width:100px;text-align:center;top:836.4px;font-size:21.2px;color:#555">15</div>
<div class="t" style="left:-33.5px;width:100px;text-align:center;top:866.4px;font-size:21.2px;color:#555">16</div>
<div class="t" style="left:-33.5px;width:100px;text-align:center;top:896.4px;font-size:21.2px;color:#555">17</div>
<div class="t" style="left:-33.5px;width:100px;text-align:center;top:926.4px;font-size:21.2px;color:#555">18</div>
<div class="t" style="left:-33.5px;width:100px;text-align:center;top:956.4px;font-size:21.2px;color:#555">19</div>
<div class="t" style="left:-33.5px;width:100px;text-align:center;top:986.4px;font-size:21.2px;color:#555">20</div>
<div class="t" style="left:-33.5px;width:100px;text-align:center;top:1016.4px;font-size:21.2px;color:#555">21</div>
<div class="t" style="left:-33.5px;width:100px;text-align:center;top:1046.4px;font-size:21.2px;color:#555">22</div>
<div class="t" style="left:-33.5px;width:100px;text-align:center;top:1076.4px;font-size:21.2px;color:#555">23</div>
<div class="t" style="left:-33.5px;width:100px;text-align:center;top:1106.4px;font-size:21.2px;color:#555">24</div>
<div class="t" style="left:-33.5px;width:100px;text-align:center;top:1136.4px;font-size:21.2px;color:#555">25</div>
<div class="t" style="left:-33.5px;width:100px;text-align:center;top:1166.4px;font-size:21.2px;color:#555">26</div>
<div class="t" style="left:-33.5px;width:100px;text-align:center;top:1196.4px;font-size:21.2px;color:#555">27</div>
<div class="t" style="left:-33.5px;width:100px;text-align:center;top:1226.4px;font-size:21.2px;color:#555">28</div>
<div class="t" style="left:-33.5px;width:100px;text-align:center;top:1256.4px;font-size:21.2px;color:#555">29</div>
<div style="position:absolute;left:37px;top:427px;width:4px;height:30px;background:#1b7343"></div>
<div style="position:absolute;left:1031px;top:428px;width:164px;height:28px;background:#fffd38"></div>
<div style="position:absolute;left:1197px;top:428px;width:120px;height:28px;background:#fffd38"></div>
<div style="position:absolute;left:1319px;top:428px;width:164px;height:28px;background:#fffd38"></div>
<div style="position:absolute;left:1485px;top:428px;width:104px;height:28px;background:#fffd38"></div>
<div style="position:absolute;left:1031px;top:458px;width:164px;height:28px;background:#fffd38"></div>
<div style="position:absolute;left:1197px;top:458px;width:120px;height:28px;background:#fffd38"></div>
<div style="position:absolute;left:1319px;top:458px;width:164px;height:28px;background:#fffd38"></div>
<div style="position:absolute;left:1485px;top:458px;width:104px;height:28px;background:#fffd38"></div>
<div style="position:absolute;left:1031px;top:488px;width:164px;height:28px;background:#fffd38"></div>
<div style="position:absolute;left:1197px;top:488px;width:120px;height:28px;background:#fffd38"></div>
<div style="position:absolute;left:1319px;top:488px;width:164px;height:28px;background:#fffd38"></div>
<div style="position:absolute;left:1485px;top:488px;width:104px;height:28px;background:#fffd38"></div>
<div style="position:absolute;left:1031px;top:518px;width:164px;height:28px;background:#fffd38"></div>
<div style="position:absolute;left:1197px;top:518px;width:120px;height:28px;background:#fffd38"></div>
<div style="position:absolute;left:1319px;top:518px;width:164px;height:28px;background:#fffd38"></div>
<div style="position:absolute;left:1485px;top:518px;width:104px;height:28px;background:#fffd38"></div>
<div style="position:absolute;left:1031px;top:548px;width:164px;height:28px;background:#fffd38"></div>
<div style="position:absolute;left:1197px;top:548px;width:120px;height:28px;background:#fffd38"></div>
<div style="position:absolute;left:1319px;top:548px;width:164px;height:28px;background:#fffd38"></div>
<div style="position:absolute;left:1485px;top:548px;width:104px;height:28px;background:#fffd38"></div>
<div style="position:absolute;left:1031px;top:578px;width:164px;height:30px;background:#fffd38"></div>
<div style="position:absolute;left:1197px;top:578px;width:120px;height:30px;background:#fffd38"></div>
<div style="position:absolute;left:1319px;top:578px;width:164px;height:30px;background:#fffd38"></div>
<div style="position:absolute;left:1485px;top:578px;width:104px;height:30px;background:#fffd38"></div>
<div style="position:absolute;left:1031px;top:610px;width:164px;height:30px;background:#fffd38"></div>
<div style="position:absolute;left:1197px;top:610px;width:120px;height:30px;background:#fffd38"></div>
<div style="position:absolute;left:1319px;top:610px;width:164px;height:30px;background:#fffd38"></div>
<div style="position:absolute;left:1485px;top:610px;width:104px;height:30px;background:#fffd38"></div>
<div style="position:absolute;left:1485px;top:642px;width:104px;height:30px;background:#fffd38"></div>
<div style="position:absolute;left:1029px;top:426px;width:562px;height:2px;background:#000"></div>
<div style="position:absolute;left:1029px;top:456px;width:562px;height:2px;background:#000"></div>
<div style="position:absolute;left:1029px;top:486px;width:562px;height:2px;background:#000"></div>
<div style="position:absolute;left:1029px;top:516px;width:562px;height:2px;background:#000"></div>
<div style="position:absolute;left:1029px;top:546px;width:562px;height:2px;background:#000"></div>
<div style="position:absolute;left:1029px;top:576px;width:562px;height:2px;background:#000"></div>
<div style="position:absolute;left:1029px;top:608px;width:562px;height:2px;background:#000"></div>
<div style="position:absolute;left:1029px;top:640px;width:562px;height:2px;background:#000"></div>
<div style="position:absolute;left:1029px;top:672px;width:562px;height:2px;background:#000"></div>
<div style="position:absolute;left:1029px;top:426px;width:2px;height:248px;background:#000"></div>
<div style="position:absolute;left:1195px;top:426px;width:2px;height:248px;background:#000"></div>
<div style="position:absolute;left:1317px;top:426px;width:2px;height:248px;background:#000"></div>
<div style="position:absolute;left:1483px;top:426px;width:2px;height:248px;background:#000"></div>
<div style="position:absolute;left:1589px;top:426px;width:2px;height:248px;background:#000"></div>
<div style="position:absolute;left:1027px;top:424px;width:164px;height:28px;border:4px solid #1a7047;box-sizing:content-box;width:164px;height:28px"></div>
<div style="position:absolute;left:1189px;top:450px;width:12px;height:12px;background:#fff"></div>
<div style="position:absolute;left:1191px;top:452px;width:10px;height:10px;background:#1a7047"></div>
<div class="t" style="left:45.60px;top:321.47px;font-size:25.44px;color:#000;transform:scaleX(0.9892);-webkit-text-stroke:0.35px #000;">A check-processing center uses exponential smoothing to forecast the number of</div>
<div class="t" style="left:44.60px;top:359.27px;font-size:25.44px;color:#000;transform:scaleX(0.9754);-webkit-text-stroke:0.35px #000;">incoming checks each month. The number of checks received in June was 40 million,</div>
<div class="t" style="left:45.60px;top:397.07px;font-size:25.44px;color:#000;transform:scaleX(0.9940);-webkit-text-stroke:0.35px #000;">while the forecast was 42 million. A smoothing constant of .2 is used.</div>
<div class="t" style="left:56.60px;top:463.41px;font-size:20.78px;color:#000;transform:scaleX(0.9636);-webkit-text-stroke:0.35px #000;">1. What is the forecast for July?</div>
<div class="t" style="left:56.60px;top:523.41px;font-size:20.78px;color:#000;transform:scaleX(0.9764);-webkit-text-stroke:0.35px #000;">2. If the center received 45 million checks in July, what would be the forecast for August?</div>
<div class="t" style="left:44.58px;top:583.85px;font-size:22.38px;color:#000;font-weight:bold;transform:scaleX(0.9083);">Instructions:</div>
<div class="t" style="left:44.60px;top:615.45px;font-size:22.38px;color:#000;font-weight:bold;transform:scaleX(0.9254);">Use the Yellow cells in creating your solution/answers to both questions.</div>
<div class="t" style="left:44.60px;top:647.45px;font-size:22.38px;color:#000;font-weight:bold;transform:scaleX(0.9293);">Use formulas to demonstrate the source of your answers.</div>
<div class="t" style="left:44.60px;top:679.45px;font-size:22.38px;color:#000;font-weight:bold;transform:scaleX(0.9364);">You may not need all the yellow cells provided.</div>
<div class="t" style="left:44.59px;top:711.75px;font-size:22.38px;color:#000;font-weight:bold;transform:scaleX(0.9352);">Format your answers to 1 decimal point.</div>
<div class="t" style="left:44.60px;top:743.75px;font-size:22.38px;color:#000;font-weight:bold;transform:scaleX(0.9189);">Each correct answer is worth  2 points.</div>
<div class="t" style="left:1035.00px;top:652.10px;font-size:18.31px;color:#000;transform:scaleX(0.8602);-webkit-text-stroke:0.35px #000;">July Forecast =</div>
<div class="t" style="left:1205.00px;top:649.14px;font-size:21.80px;color:#000;transform:scaleX(0.9781);-webkit-text-stroke:0.35px #000;">42,400,000</div>
<div class="t" style="left:1323.00px;top:652.10px;font-size:18.31px;color:#000;transform:scaleX(0.8785);-webkit-text-stroke:0.35px #000;">August Forecast=</div>
<div style="position:absolute;left:0;top:1280px;width:2476px;height:55px;background:#f0f0f0"></div>
<div style="position:absolute;left:0;top:1280px;width:2476px;height:3px;background:#c9c9c9"></div>
<div style="position:absolute;left:0;top:1334px;width:2476px;height:2px;background:#a2a2a2"></div>
<div style="position:absolute;left:0;top:1380px;width:2476px;height:5px;background:#b9b9b9"></div>
<div style="position:absolute;left:0;top:1336px;width:2475px;height:44px;border-bottom:1.5px solid #9c9c9c;border-bottom-right-radius:10px;background:linear-gradient(#e6e6e6,#d8d8d8)"></div>
<div style="position:absolute;left:2474.5px;top:0;width:1.5px;height:1370px;background:#a5a5a5"></div>
<svg style="position:absolute;left:0;top:1270px" width="2476" height="115" viewBox="0 1270 2476 115"><path d="M116.5,1282 L116.5,1323 Q116.5,1327.5 121,1327.5 L485,1327.5 Q489.5,1327.5 489.5,1323 L489.5,1282 Z" fill="#fff" stroke="#c4c4c4" stroke-width="1.5"/><rect x="117" y="1328" width="372" height="1.5" fill="#dcdcdc"/><polygon points="25,1308.9 38.8,1299.4 38.8,1318.8" fill="#b5b5b5" stroke="#b5b5b5" stroke-width="1.5" stroke-linejoin="round"/><polygon points="71.1,1299.4 71.1,1318.8 84.8,1308.9" fill="#b5b5b5" stroke="#b5b5b5" stroke-width="1.5" stroke-linejoin="round"/><path d="M148.6,1305.5 L148.6,1302 A5.3,5.3 0 0 1 159.20000000000002,1302 L159.20000000000002,1305.5" fill="none" stroke="#636363" stroke-width="2.8"/><rect x="145.0" y="1305.3" width="17.8" height="11.6" rx="2" fill="#636363"/><path d="M523.2,1305.5 L523.2,1302 A5.3,5.3 0 0 1 533.8,1302 L533.8,1305.5" fill="none" stroke="#636363" stroke-width="2.8"/><rect x="519.6" y="1305.3" width="17.8" height="11.6" rx="2" fill="#636363"/><path d="M949.2,1305.5 L949.2,1302 A5.3,5.3 0 0 1 959.8,1302 L959.8,1305.5" fill="none" stroke="#636363" stroke-width="2.8"/><rect x="945.6" y="1305.3" width="17.8" height="11.6" rx="2" fill="#636363"/><path d="M1240.7,1305.5 L1240.7,1302 A5.3,5.3 0 0 1 1251.3,1302 L1251.3,1305.5" fill="none" stroke="#636363" stroke-width="2.8"/><rect x="1237.1" y="1305.3" width="17.8" height="11.6" rx="2" fill="#636363"/><rect x="914.5" y="1285" width="2" height="40" fill="#cdcdcd"/><rect x="1206.6" y="1285" width="2" height="40" fill="#cdcdcd"/><rect x="1484.5" y="1285" width="2" height="40" fill="#cdcdcd"/><rect x="1560.7" y="1285" width="2" height="40" fill="#cdcdcd"/><path d="M1524.7,1298 L1524.7,1317 M1515,1307.5 L1534.5,1307.5" stroke="#b3b3b3" stroke-width="3.2"/><circle cx="153.7" cy="1346.6" r="3.8" fill="none" stroke="#616161" stroke-width="1.6"/><path d="M159,1354.4 L164,1352 Q167,1349 163.3,1347 L153.7,1350.5 L144.1,1347 Q140.5,1349 142.5,1351.5 L148.4,1354 L148,1360.8 L145.6,1368.9 Q146.5,1372 149,1371 L151.2,1367.1 L154,1361.5 L156.2,1366" fill="none" stroke="#616161" stroke-width="1.6" stroke-linejoin="round"/><path d="M157,1357.6 L170.3,1371 M170.3,1357.6 L157,1371" stroke="#616161" stroke-width="1.7"/><rect x="1864.3" y="1345.1" width="23.3" height="23.4" rx="1.5" fill="none" stroke="#616161" stroke-width="2"/><path d="M1872,1345 L1872,1369 M1880,1345 L1880,1369 M1864,1353 L1888,1353 M1864,1360.9 L1888,1360.9" stroke="#616161" stroke-width="1.8"/><rect x="1935.4" y="1345.1" width="25.1" height="23.4" rx="1.5" fill="none" stroke="#616161" stroke-width="2"/><rect x="1941.3" y="1349.1" width="13.4" height="15.4" fill="none" stroke="#616161" stroke-width="2"/><path d="M1944.1,1353 L1951.9,1353 M1944.1,1357 L1951.9,1357 M1944.1,1360.9 L1951.9,1360.9" stroke="#616161" stroke-width="1.6"/><rect x="2006.3" y="1345.1" width="25.4" height="23.4" rx="1.5" fill="none" stroke="#616161" stroke-width="2"/><path d="M2013.6,1345 L2013.6,1359.4 M2006,1359.4 L2022,1359.4 L2022,1345" fill="none" stroke="#616161" stroke-width="1.8"/><rect x="2071" y="1356" width="16" height="3.4" fill="#616161"/><rect x="2103.4" y="1354.6" width="195.3" height="7.4" rx="3.7" fill="#9b9b9b"/><circle cx="2201" cy="1357.6" r="11.4" fill="#c4c4c4"/><circle cx="2201" cy="1356.9" r="10.8" fill="#ffffff"/><path d="M2323,1349.5 L2323,1366 M2315,1357.8 L2331,1357.8" stroke="#616161" stroke-width="3.2"/></svg>
<div class="t" style="left:183.47px;top:1295.28px;font-size:24.71px;color:#1a7f4b;font-weight:bold;transform:scaleX(0.9694);">Exponential Smoothing</div>
<div class="t" style="left:559.38px;top:1295.28px;font-size:24.71px;color:#595959;transform:scaleX(1.0120);">MovingAverageWithWeights</div>
<div class="t" style="left:979.96px;top:1295.28px;font-size:24.71px;color:#595959;transform:scaleX(0.9948);">MAD MSE MAPE</div>
<div class="t" style="left:1274.99px;top:1295.28px;font-size:24.71px;color:#595959;transform:scaleX(1.0021);">Seasonal Index</div>
<div class="t" style="left:41.33px;top:1345.97px;font-size:25.44px;color:#555;transform:scaleX(0.9857);">Enter</div>
<div class="t" style="left:179.20px;top:1345.97px;font-size:25.44px;color:#555;transform:scaleX(1.0038);">Accessibility: Investigate</div>
<div class="t" style="left:2363.90px;top:1345.47px;font-size:25.44px;color:#555;transform:scaleX(0.9776);">100%</div>
<div style="position:absolute;left:2474px;top:160px;width:2px;height:3px;background:#222"></div>
</body></html>
